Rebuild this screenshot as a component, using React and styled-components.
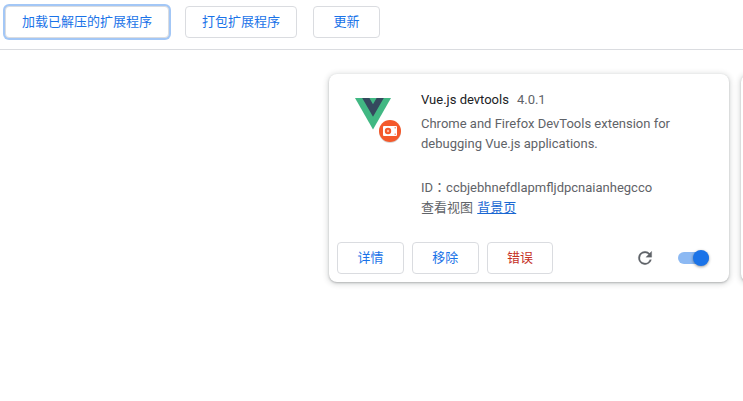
import React from "react";
import styled, { createGlobalStyle } from "styled-components";

const blue = "#1a73e8";
const red = "#c5301f";
const primaryText = "#202124";
const secondaryText = "#5f6368";
const border = "#dadce0";

const GlobalStyle = createGlobalStyle`
  body {
    background: #fff;
    color: ${secondaryText};
    font-family: Roboto, "Noto Sans CJK SC", sans-serif;
    font-size: 13px;
    line-height: 20px;
    margin: 0;
    overflow: hidden;
  }
`;

const StyledPage = styled.div`
  height: 401px;
  overflow: hidden;
  width: 743px;
`;

const StyledToolbar = styled.div`
  border-bottom: 1px solid ${border};
  box-sizing: border-box;
  display: flex;
  gap: 16px;
  height: 50px;
  padding: 6px 5px 0;
`;

const StyledButton = styled.button`
  background: #fff;
  border: 1px solid ${border};
  border-radius: 4px;
  box-shadow: ${({ $focused }) =>
    $focused ? "0 0 0 2px rgba(26, 115, 232, 0.4)" : "none"};
  box-sizing: border-box;
  color: ${({ $danger }) => ($danger ? red : blue)};
  flex: none;
  font: inherit;
  height: 32px;
  line-height: 30px;
  min-width: 66.8px;
  outline: none;
  padding: 0 16px;
`;

const StyledCards = styled.div`
  display: flex;
  gap: 12px;
  padding: 24px 0 0 329px;
`;

const StyledCard = styled.div`
  background: #fff;
  border-radius: 8px;
  box-shadow: 0 1px 2px rgba(60, 64, 67, 0.3),
    0 1px 5px 2px rgba(60, 64, 67, 0.15);
  box-sizing: border-box;
  display: flex;
  flex: none;
  flex-direction: column;
  height: 208px;
  width: 400px;
`;

const StyledMain = styled.div`
  display: flex;
  flex: 1;
  padding: 16px 20px 0 24px;
`;

const StyledIconWrapper = styled.div`
  flex: none;
  height: 56px;
  width: 68px;
`;

const StyledTitle = styled.div`
  color: ${primaryText};
  display: flex;
  gap: 8px;
  margin-bottom: 4px;
`;

const StyledVersion = styled.span`
  color: ${secondaryText};
`;

const StyledDescription = styled.div`
  height: 64px;
  width: 270px;
`;

const StyledRow = styled.div`
  height: 20px;
  white-space: nowrap;
`;

/* The TC face centres the full-width colon in its cell */
const StyledColon = styled.span`
  font-family: "Noto Sans CJK TC", sans-serif;
  line-height: 1;
`;

const StyledLink = styled.a`
  color: #1967d2;
  margin-left: 1px;
  text-decoration: underline;
`;

const StyledFooter = styled.div`
  align-items: center;
  display: flex;
  gap: 8px;
  height: 32px;
  padding: 0 20px 8px 8px;
`;

const StyledReload = styled.svg`
  fill: ${secondaryText};
  height: 20px;
  margin-left: auto;
  margin-right: 15px;
  stroke: ${secondaryText};
  stroke-width: 0.3;
  width: 20px;
`;

const StyledToggle = styled.span`
  align-items: center;
  background: rgba(26, 115, 232, 0.5);
  border-radius: 6px;
  display: flex;
  height: 12px;
  justify-content: flex-end;
  width: 31px;
`;

const StyledKnob = styled.span`
  background: ${blue};
  border-radius: 50%;
  box-shadow: 0 1px 3px rgba(0, 0, 0, 0.4);
  flex: none;
  height: 16px;
  width: 16px;
`;

const VueIcon = () => (
  <svg width="56" height="56" viewBox="0 0 56 56">
    <path d="M2 8h36L20 39.5z" fill="#41b883" />
    <path d="M9.2 8h7.2l3.6 6.2L23.6 8h7.2L20 26.8z" fill="#35495e" />
    <circle cx="37" cy="42" r="11" fill="#000" opacity=".16" />
    <circle cx="37" cy="41" r="11" fill="#f4592b" />
    <rect x="30" y="36" width="14" height="10" rx="1" fill="#fff" />
    <circle cx="35" cy="41" r="2.2" fill="#f9b29b" stroke="#f4592b" strokeWidth="2" />
    <path d="M41.5 37h1.5v1.5h-1.5zM41.5 43.5h1.5v1.5h-1.5z" fill="#f4592b" opacity=".6" />
  </svg>
);

const ReloadIcon = () => (
  <StyledReload viewBox="0 0 24 24">
    <path d="M17.65 6.35A7.96 7.96 0 0 0 12 4a8 8 0 1 0 7.73 10h-2.08A6 6 0 1 1 12 6c1.66 0 3.14.69 4.22 1.78L13 11h7V4z" />
  </StyledReload>
);

const ExtensionCard = () => (
  <StyledCard>
    <StyledMain>
      <StyledIconWrapper>
        <VueIcon />
      </StyledIconWrapper>
      <div>
        <StyledTitle>
          Vue.js devtools <StyledVersion>4.0.1</StyledVersion>
        </StyledTitle>
        <StyledDescription>
          Chrome and Firefox DevTools extension for debugging Vue.js
          applications.
        </StyledDescription>
        <StyledRow>
          ID<StyledColon>：</StyledColon>ccbjebhnefdlapmfljdpcnaianhegcco
        </StyledRow>
        <StyledRow>
          查看视图 <StyledLink>背景页</StyledLink>
        </StyledRow>
      </div>
    </StyledMain>
    <StyledFooter>
      <StyledButton>详情</StyledButton>
      <StyledButton>移除</StyledButton>
      <StyledButton $danger>错误</StyledButton>
      <ReloadIcon />
      <StyledToggle>
        <StyledKnob />
      </StyledToggle>
    </StyledFooter>
  </StyledCard>
);

const App = () => (
  <StyledPage>
    <GlobalStyle />
    <StyledToolbar>
      <StyledButton $focused>加载已解压的扩展程序</StyledButton>
      <StyledButton>打包扩展程序</StyledButton>
      <StyledButton>更新</StyledButton>
    </StyledToolbar>
    <StyledCards>
      <ExtensionCard />
      <StyledCard />
    </StyledCards>
  </StyledPage>
);

export default App;
